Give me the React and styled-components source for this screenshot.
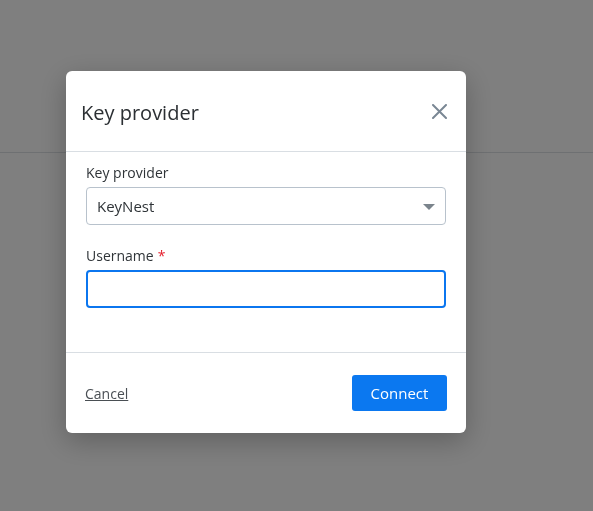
import React from "react";
import styled, { createGlobalStyle } from "styled-components";

const Global = createGlobalStyle`
  html, body { margin: 0; padding: 0; }
  body { font-family: "Open Sans", "Noto Sans", sans-serif; background: #fff; }
  * { box-sizing: border-box; }
`;

const Page = styled.div`
  height: 511px;
  background: #fff;
`;

const PageHeader = styled.div`
  height: 153px;
  border-bottom: 1px solid #dde1e5;
`;

const Overlay = styled.div`
  position: fixed;
  inset: 0;
  background: rgba(0, 0, 0, 0.5);
  display: flex;
  align-items: flex-start;
  justify-content: flex-start;
  padding: 71px 0 0 66px;
`;

const Dialog = styled.div`
  width: 400px;
  background: #fff;
  border-radius: 6px;
  box-shadow: 0 8px 28px rgba(0, 0, 0, 0.25);
  display: flex;
  flex-direction: column;
`;

const Header = styled.div`
  height: 81px;
  display: flex;
  align-items: center;
  justify-content: space-between;
  padding: 0 18px 0 15px;
  border-bottom: 1px solid #d9dee3;
`;

const Title = styled.h2`
  margin: 0;
  font-size: 20px;
  font-weight: 400;
  color: #2b2f33;
  position: relative;
  top: 1px;
`;

const CloseButton = styled.button`
  border: none;
  background: none;
  padding: 0;
  width: 18px;
  height: 18px;
  display: flex;
  align-items: center;
  justify-content: center;
  cursor: pointer;
`;

const Body = styled.div`
  padding: 11px 20px 44px 20px;
  border-bottom: 1px solid #d9dee3;
  display: flex;
  flex-direction: column;
`;

const Field = styled.div`
  display: flex;
  flex-direction: column;
  gap: 4px;
  margin-bottom: ${(p) => p.$mb || 0}px;
`;

const Label = styled.label`
  font-size: 14px;
  line-height: 20px;
  color: #2f3438;
`;

const Required = styled.span`
  color: #e5202e;
  margin-left: 4px;
`;

const SelectBox = styled.div`
  height: 38px;
  border: 1px solid #b8c2cc;
  border-radius: 4px;
  display: flex;
  align-items: center;
  justify-content: space-between;
  padding: 0 10px 0 10px;
  font-size: 15px;
  color: #2f3438;
`;

const Caret = styled.span`
  width: 0;
  height: 0;
  border-left: 6px solid transparent;
  border-right: 6px solid transparent;
  border-top: 6px solid #7b848c;
  margin-top: 2px;
`;

const Input = styled.input`
  height: 38px;
  border: 2px solid #0b76ef;
  border-radius: 4px;
  outline: none;
  font-family: inherit;
  font-size: 15px;
  padding: 0 10px;
`;

const Footer = styled.div`
  height: 80px;
  display: flex;
  align-items: center;
  justify-content: space-between;
  padding: 0 19px 0 19px;
`;

const CancelLink = styled.a`
  font-size: 14px;
  color: #4a4f54;
  text-decoration: underline;
  cursor: pointer;
`;

const PrimaryButton = styled.button`
  width: 95px;
  height: 36px;
  border: none;
  border-radius: 3px;
  background: #0b78f0;
  color: #fff;
  font-family: inherit;
  font-size: 15px;
  cursor: pointer;
`;

export default function App() {
  return (
    <>
      <Global />
      <Page>
        <PageHeader />
      </Page>
      <Overlay>
        <Dialog>
          <Header>
            <Title>Key provider</Title>
            <CloseButton aria-label="Close">
              <svg width="15" height="15" viewBox="0 0 15 15">
                <path d="M1 1 L14 14 M14 1 L1 14" stroke="#7a8794" strokeWidth="2" strokeLinecap="round" />
              </svg>
            </CloseButton>
          </Header>
          <Body>
            <Field $mb={21}>
              <Label>Key provider</Label>
              <SelectBox>
                <span>KeyNest</span>
                <Caret />
              </SelectBox>
            </Field>
            <Field>
              <Label>
                Username<Required>*</Required>
              </Label>
              <Input />
            </Field>
          </Body>
          <Footer>
            <CancelLink>Cancel</CancelLink>
            <PrimaryButton>Connect</PrimaryButton>
          </Footer>
        </Dialog>
      </Overlay>
    </>
  );
}
